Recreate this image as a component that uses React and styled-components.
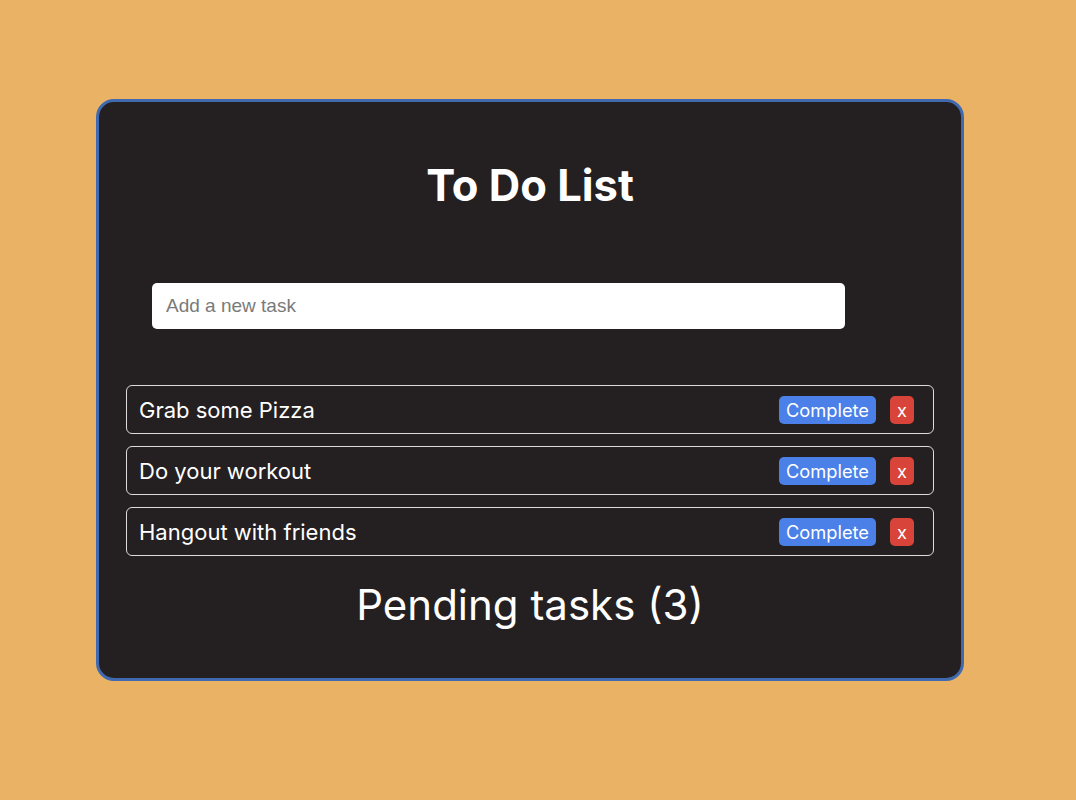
import React from "react";
import styled, { createGlobalStyle } from "styled-components";

const Global = createGlobalStyle`
  html, body { margin: 0; padding: 0; }
  body {
    background: #e9b264;
    font-family: Inter, "Noto Sans", sans-serif;
    min-height: 800px;
  }
  * { box-sizing: border-box; }
`;

const Page = styled.div`
  padding: 99px 0 0 96px;
`;

const Card = styled.div`
  width: 868px;
  height: 582px;
  background: #242021;
  border: 3px solid #4169b0;
  border-radius: 18px;
  padding: 57px 27px 0;
  display: flex;
  flex-direction: column;
`;

const Title = styled.h1`
  margin: 0;
  text-align: center;
  color: #ffffff;
  font-size: 43.5px;
  font-weight: 700;
  line-height: 52px;
`;

const Input = styled.input`
  margin: 72px 0 0 26px;
  width: 693px;
  height: 46px;
  border: none;
  border-radius: 5px;
  background: #ffffff;
  padding: 0 14px;
  font-family: "Liberation Sans", Arial, sans-serif;
  font-size: 19px;
  color: #222;
  outline: none;
  &::placeholder { color: #7a7a7a; }
`;

const List = styled.ul`
  list-style: none;
  margin: 56px 0 0;
  padding: 0;
  display: flex;
  flex-direction: column;
  gap: 12px;
`;

const Row = styled.li`
  height: 49px;
  border: 1.5px solid #dcdcdc;
  border-radius: 6px;
  display: flex;
  align-items: center;
  padding: 1px 19px 0 12px;
  gap: 14px;
`;

const TaskText = styled.span`
  flex: 1;
  color: #ffffff;
  font-size: 22px;
`;

const Button = styled.button`
  height: 28px;
  border: none;
  border-radius: 5px;
  color: #ffffff;
  font-family: Inter, sans-serif;
  font-size: 18.3px;
  padding: 0;
  width: ${(p) => (p.$danger ? "24px" : "97px")};
  background: ${(p) => (p.$danger ? "#d8443a" : "#4a80e8")};
  display: flex;
  align-items: center;
  justify-content: center;
  cursor: pointer;
`;

const Pending = styled.p`
  margin: 24px 0 0;
  text-align: center;
  color: #ffffff;
  font-size: 42px;
  line-height: 50px;
  font-weight: 400;
`;

const tasks = ["Grab some Pizza", "Do your workout", "Hangout with friends"];

export default function App() {
  return (
    <>
      <Global />
      <Page>
        <Card>
          <Title>To Do List</Title>
          <Input placeholder="Add a new task" />
          <List>
            {tasks.map((t) => (
              <Row key={t}>
                <TaskText>{t}</TaskText>
                <Button>Complete</Button>
                <Button $danger>x</Button>
              </Row>
            ))}
          </List>
          <Pending>Pending tasks ({tasks.length})</Pending>
        </Card>
      </Page>
    </>
  );
}
